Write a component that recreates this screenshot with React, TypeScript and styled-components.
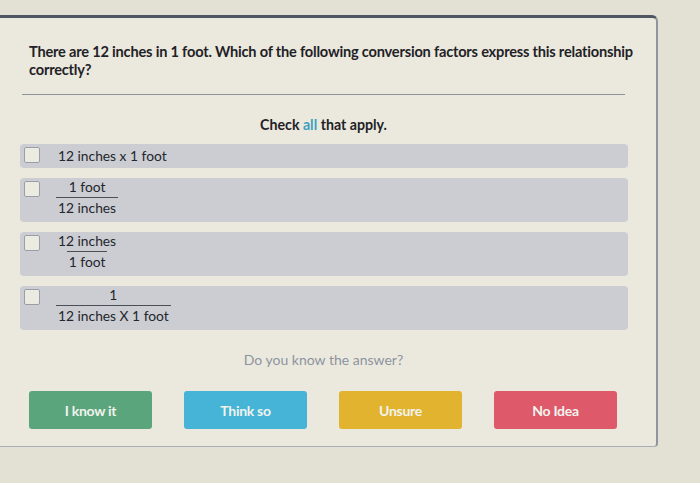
import React from "react";
import styled, { createGlobalStyle } from "styled-components";

const Global = createGlobalStyle`
  html, body {
    margin: 0;
    padding: 0;
    background: #e3e1d3;
    font-family: Lato, "Open Sans", "Liberation Sans", sans-serif;
  }
`;

const Page = styled.div`
  width: 700px;
  height: 483px;
  padding-top: 15px;
  box-sizing: border-box;
  overflow: hidden;
`;

const Card = styled.div`
  width: 658px;
  height: 432px;
  box-sizing: border-box;
  background: #ebe9dd;
  border-top: 3px solid #4d5661;
  border-right: 2px solid #8f94a0;
  border-bottom: 1px solid #a9adb5;
  border-top-right-radius: 6px;
  border-bottom-right-radius: 4px;
  padding: 25px 0 0 22px;
`;

const Question = styled.div`
  width: 614px;
  padding-left: 7px;
  font-size: 14.6px;
  font-weight: 700;
  line-height: 18px;
  color: #1f2227;
  letter-spacing: -0.2px;
`;

const Divider = styled.div`
  width: 603px;
  height: 1px;
  background: #8d929c;
  margin-top: 15px;
`;

const Instruction = styled.div`
  width: 603px;
  text-align: center;
  font-size: 14.2px;
  font-weight: 700;
  color: #1f2227;
  margin-top: 21px;
  margin-bottom: 11px;
  & span {
    color: #3f9fbd;
  }
`;

const Options = styled.div`
  display: flex;
  flex-direction: column;
  gap: 10px;
  margin-left: -2px;
  width: 608px;
`;

const Option = styled.div<{ $tall?: boolean }>`
  display: flex;
  align-items: flex-start;
  background: #cbcdd3;
  border-radius: 4px;
  height: ${(p) => (p.$tall ? "44px" : "24px")};
  padding: 3px 0 0 4px;
  box-sizing: border-box;
`;

const Box = styled.div`
  width: 16px;
  height: 16px;
  box-sizing: border-box;
  border: 1.5px solid #9a9ea6;
  border-radius: 2px;
  background: #ecebe2;
  flex-shrink: 0;
`;

const Label = styled.div`
  margin-left: 18px;
  font-size: 13.8px;
  color: #23262c;
  line-height: 17px;
`;

const Fraction = styled.div`
  margin: -3px 0 0 16px;
  display: inline-flex;
  flex-direction: column;
  align-items: center;
  font-size: 13.8px;
  color: #23262c;
  line-height: 17px;
`;

const Num = styled.div`
  padding: 0 2px 2px;
`;

const Den = styled.div`
  border-top: 1px solid #4a4e56;
  padding: 1px 2px 0;
`;

const Prompt = styled.div`
  width: 603px;
  text-align: center;
  font-size: 14px;
  color: #8d93a1;
  margin-top: 21px;
`;

const Buttons = styled.div`
  display: flex;
  gap: 32px;
  margin-top: 23px;
  margin-left: 7px;
`;

const Btn = styled.div<{ $bg: string }>`
  width: 123px;
  height: 38px;
  border-radius: 3px;
  background: ${(p) => p.$bg};
  color: #f1f3ee;
  font-size: 14px;
  font-weight: 700;
  display: flex;
  align-items: center;
  justify-content: center;
  letter-spacing: -0.3px;
`;

export default function App() {
  return (
    <>
      <Global />
      <Page>
        <Card>
          <Question>
            There are 12 inches in 1 foot. Which of the following conversion factors express this relationship
            correctly?
          </Question>
          <Divider />
          <Instruction>
            Check <span>all</span> that apply.
          </Instruction>
          <Options>
            <Option>
              <Box />
              <Label>12 inches x 1 foot</Label>
            </Option>
            <Option $tall>
              <Box />
              <Fraction>
                <Num>1 foot</Num>
                <Den>12 inches</Den>
              </Fraction>
            </Option>
            <Option $tall>
              <Box />
              <Fraction>
                <Num>12 inches</Num>
                <Den>1 foot</Den>
              </Fraction>
            </Option>
            <Option $tall>
              <Box />
              <Fraction>
                <Num>1</Num>
                <Den>12 inches X 1 foot</Den>
              </Fraction>
            </Option>
          </Options>
          <Prompt>Do you know the answer?</Prompt>
          <Buttons>
            <Btn $bg="#5ba57c">I know it</Btn>
            <Btn $bg="#45b4d6">Think so</Btn>
            <Btn $bg="#e2b32f">Unsure</Btn>
            <Btn $bg="#de5a6a">No Idea</Btn>
          </Buttons>
        </Card>
      </Page>
    </>
  );
}
